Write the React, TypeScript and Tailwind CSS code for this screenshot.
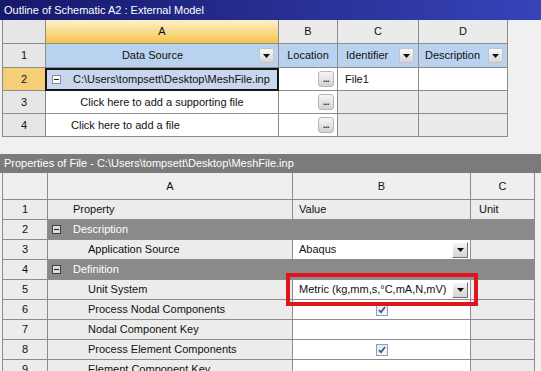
import React from 'react'

const font = { fontFamily: '"Liberation Sans", Arial, sans-serif' }

function DropBtn({ raised = false }: { raised?: boolean }) {
  return (
    <div
      className={
        raised
          ? 'w-[16px] h-[16px] shrink-0 flex items-center justify-center bg-gradient-to-b from-[#f4f4f4] to-[#d4d4d4] border border-t-[#ffffff] border-l-[#ffffff] border-r-[#707070] border-b-[#707070]'
          : 'w-[15px] h-[15px] shrink-0 flex items-center justify-center rounded-[2px] bg-gradient-to-b from-[#fafafa] to-[#d6d6d6] border border-[#c4c4c4]'
      }
    >
      <svg width="7" height="4" viewBox="0 0 7 4">
        <path d="M0 0h7L3.5 4z" fill="#111" />
      </svg>
    </div>
  )
}

function DotsBtn() {
  return (
    <div className="w-[16px] h-[16px] rounded-[3px] bg-gradient-to-b from-[#f6f6f6] to-[#d2d2d2] border border-[#b8b8b8] flex items-end justify-center pb-[2px]">
      <span className="text-[9px] leading-none font-bold text-[#222] tracking-[-0.5px]">...</span>
    </div>
  )
}

function Minus({ dark = false }: { dark?: boolean }) {
  return (
    <div
      className={
        dark
          ? 'w-[9px] h-[9px] shrink-0 bg-[#dcdcdc] border border-[#404040] flex items-center justify-center'
          : 'w-[9px] h-[9px] shrink-0 bg-white border border-[#8a8a8a] flex items-center justify-center'
      }
    >
      <div className="w-[5px] h-px bg-[#222]" />
    </div>
  )
}

function Check() {
  return (
    <div className="w-[12px] h-[12px] border border-[#8f9fb8] bg-gradient-to-br from-[#dfe6f0] to-[#f8fafc] flex items-center justify-center">
      <svg width="8" height="8" viewBox="0 0 8 8">
        <path d="M1 4l2 2.3L7 1" stroke="#3a4f86" strokeWidth="1.6" fill="none" />
      </svg>
    </div>
  )
}

const cell = 'border-r border-b border-[#8c8c8c] flex items-center text-[11px] text-[#111] whitespace-nowrap'

function Outline() {
  return (
    <div>
      <div className="h-[20px] bg-gradient-to-r from-[#16186a] to-[#3744b9] text-white text-[11px] pl-[4px] flex items-center">
        Outline of Schematic A2 : External Model
      </div>
      <div className="ml-[2px] w-[505px] grid grid-cols-[43px_233px_59px_81px_89px] border-l border-[#8c8c8c]">
        {/* header letters */}
        <div className={`${cell} h-[24px] bg-[#e6e6e6]`} />
        <div className={`${cell} h-[24px] justify-center bg-gradient-to-b from-[#fdf0c8] to-[#f5c545]`}>A</div>
        <div className={`${cell} h-[24px] justify-center bg-[#ebebeb]`}>B</div>
        <div className={`${cell} h-[24px] justify-center bg-[#ebebeb]`}>C</div>
        <div className={`${cell} h-[24px] justify-center bg-[#ebebeb]`}>D</div>
        {/* row 1 */}
        <div className={`${cell} h-[24px] justify-center bg-[#e6e6e6]`}>1</div>
        <div className={`${cell} h-[24px] bg-[#b9d2f0]`}>
          <span className="flex-1 text-center">Data Source</span>
          <div className="mr-[4px]"><DropBtn /></div>
        </div>
        <div className={`${cell} h-[24px] justify-center bg-[#b9d2f0]`}>Location</div>
        <div className={`${cell} h-[24px] bg-[#b9d2f0] pl-[8px] justify-between pr-[4px]`}>
          <span>Identifier</span>
          <DropBtn />
        </div>
        <div className={`${cell} h-[24px] bg-[#b9d2f0] pl-[6px] justify-between pr-[4px]`}>
          <span>Description</span>
          <DropBtn />
        </div>
        {/* row 2 */}
        <div className={`${cell} h-[23px] justify-center bg-[#f4cf78]`}>2</div>
        <div className="h-[23px] border-2 border-[#151515] bg-[#c8d6ef] flex items-center text-[11px] text-[#111] whitespace-nowrap -ml-px pl-[5px]">
          <Minus />
          <span className="ml-[12px]">C:\Users\tompsett\Desktop\MeshFile.inp</span>
        </div>
        <div className={`${cell} h-[23px] justify-end pr-[3px] bg-white`}><DotsBtn /></div>
        <div className={`${cell} h-[23px] bg-white pl-[7px]`}>File1</div>
        <div className={`${cell} h-[23px] bg-white`} />
        {/* row 3 */}
        <div className={`${cell} h-[23px] justify-center bg-[#e6e6e6]`}>3</div>
        <div className={`${cell} h-[23px] justify-center bg-white`}>Click here to add a supporting file</div>
        <div className={`${cell} h-[23px] justify-end pr-[3px] bg-white`}><DotsBtn /></div>
        <div className={`${cell} h-[23px] bg-[#ebebeb]`} />
        <div className={`${cell} h-[23px] bg-[#ebebeb]`} />
        {/* row 4 */}
        <div className={`${cell} h-[23px] justify-center bg-[#e6e6e6]`}>4</div>
        <div className={`${cell} h-[23px] bg-white pl-[25px]`}>Click here to add a file</div>
        <div className={`${cell} h-[23px] justify-end pr-[3px] bg-white`}><DotsBtn /></div>
        <div className={`${cell} h-[23px] bg-[#ebebeb]`} />
        <div className={`${cell} h-[23px] bg-[#ebebeb]`} />
      </div>
    </div>
  )
}

type PRow =
  | { n: number; group: string }
  | { n: number; label: string; indent?: boolean; value?: 'drop' | 'metric' | 'check' | 'blank' | 'plain'; text?: string }

const props: PRow[] = [
  { n: 1, label: 'Property', value: 'plain', text: 'Value' },
  { n: 2, group: 'Description' },
  { n: 3, label: 'Application Source', indent: true, value: 'drop', text: 'Abaqus' },
  { n: 4, group: 'Definition' },
  { n: 5, label: 'Unit System', indent: true, value: 'metric', text: 'Metric (kg,mm,s,\u00b0C,mA,N,mV)' },
  { n: 6, label: 'Process Nodal Components', indent: true, value: 'check' },
  { n: 7, label: 'Nodal Component Key', indent: true, value: 'blank' },
  { n: 8, label: 'Process Element Components', indent: true, value: 'check' },
  { n: 9, label: 'Element Component Key', indent: true, value: 'blank' },
]

function Properties() {
  return (
    <div>
      <div className="h-[19px] bg-[#7b7b7b] text-white text-[11px] pl-[4px] flex items-center">
        Properties of File - C:\Users\tompsett\Desktop\MeshFile.inp
      </div>
      <div className="ml-[2px] w-[532px] grid grid-cols-[45px_245px_178px_64px] border-l border-[#8c8c8c]">
        <div className={`${cell} h-[27px] bg-[#efefef]`} />
        <div className={`${cell} h-[27px] justify-center bg-[#efefef]`}>A</div>
        <div className={`${cell} h-[27px] justify-center bg-[#efefef]`}>B</div>
        <div className={`${cell} h-[27px] justify-center bg-[#efefef]`}>C</div>
        {props.map((r) =>
          'group' in r ? (
            <React.Fragment key={r.n}>
              <div className={`${cell} h-[20px] justify-center bg-[#ececec]`}>{r.n}</div>
              <div className="col-span-3 h-[20px] bg-[#8a8a8a] border-b border-r border-[#8c8c8c] flex items-center text-[11px] text-white pl-[4px]">
                <Minus dark />
                <span className="ml-[12px]">{r.group}</span>
              </div>
            </React.Fragment>
          ) : (
            <React.Fragment key={r.n}>
              <div className={`${cell} h-[20px] justify-center bg-[#ececec]`}>{r.n}</div>
              <div className={`${cell} h-[20px] bg-[#ececec] ${r.indent ? 'pl-[40px]' : 'pl-[25px]'}`}>{r.label}</div>
              {r.value === 'plain' && <div className={`${cell} h-[20px] bg-[#ececec] pl-[6px]`}>{r.text}</div>}
              {r.value === 'drop' && (
                <div className={`${cell} h-[20px] bg-white pl-[6px] justify-between pr-[2px]`}>
                  <span>{r.text}</span>
                  <DropBtn raised />
                </div>
              )}
              {r.value === 'metric' && (
                <div className={`${cell} h-[20px] bg-white pl-[6px] justify-between pr-[2px] relative`}>
                  <span>{r.text}</span>
                  <DropBtn raised />
                  <div className="absolute -left-[7px] -right-[8px] -top-[7px] -bottom-[7px] border-[4px] border-[#e0141c] pointer-events-none" />
                </div>
              )}
              {r.value === 'check' && (
                <div className={`${cell} h-[20px] bg-white justify-center`}><Check /></div>
              )}
              {r.value === 'blank' && <div className={`${cell} h-[20px] bg-white`} />}
              <div className={`${cell} h-[20px] bg-[#ececec] ${r.n === 1 ? 'pl-[8px]' : ''}`}>{r.n === 1 ? 'Unit' : ''}</div>
            </React.Fragment>
          )
        )}
      </div>
    </div>
  )
}

export default function App() {
  return (
    <div className="w-[541px] h-[371px] overflow-hidden bg-[#f0f0f0]" style={font}>
      <Outline />
      <div className="h-[17px]" />
      <Properties />
    </div>
  )
}
